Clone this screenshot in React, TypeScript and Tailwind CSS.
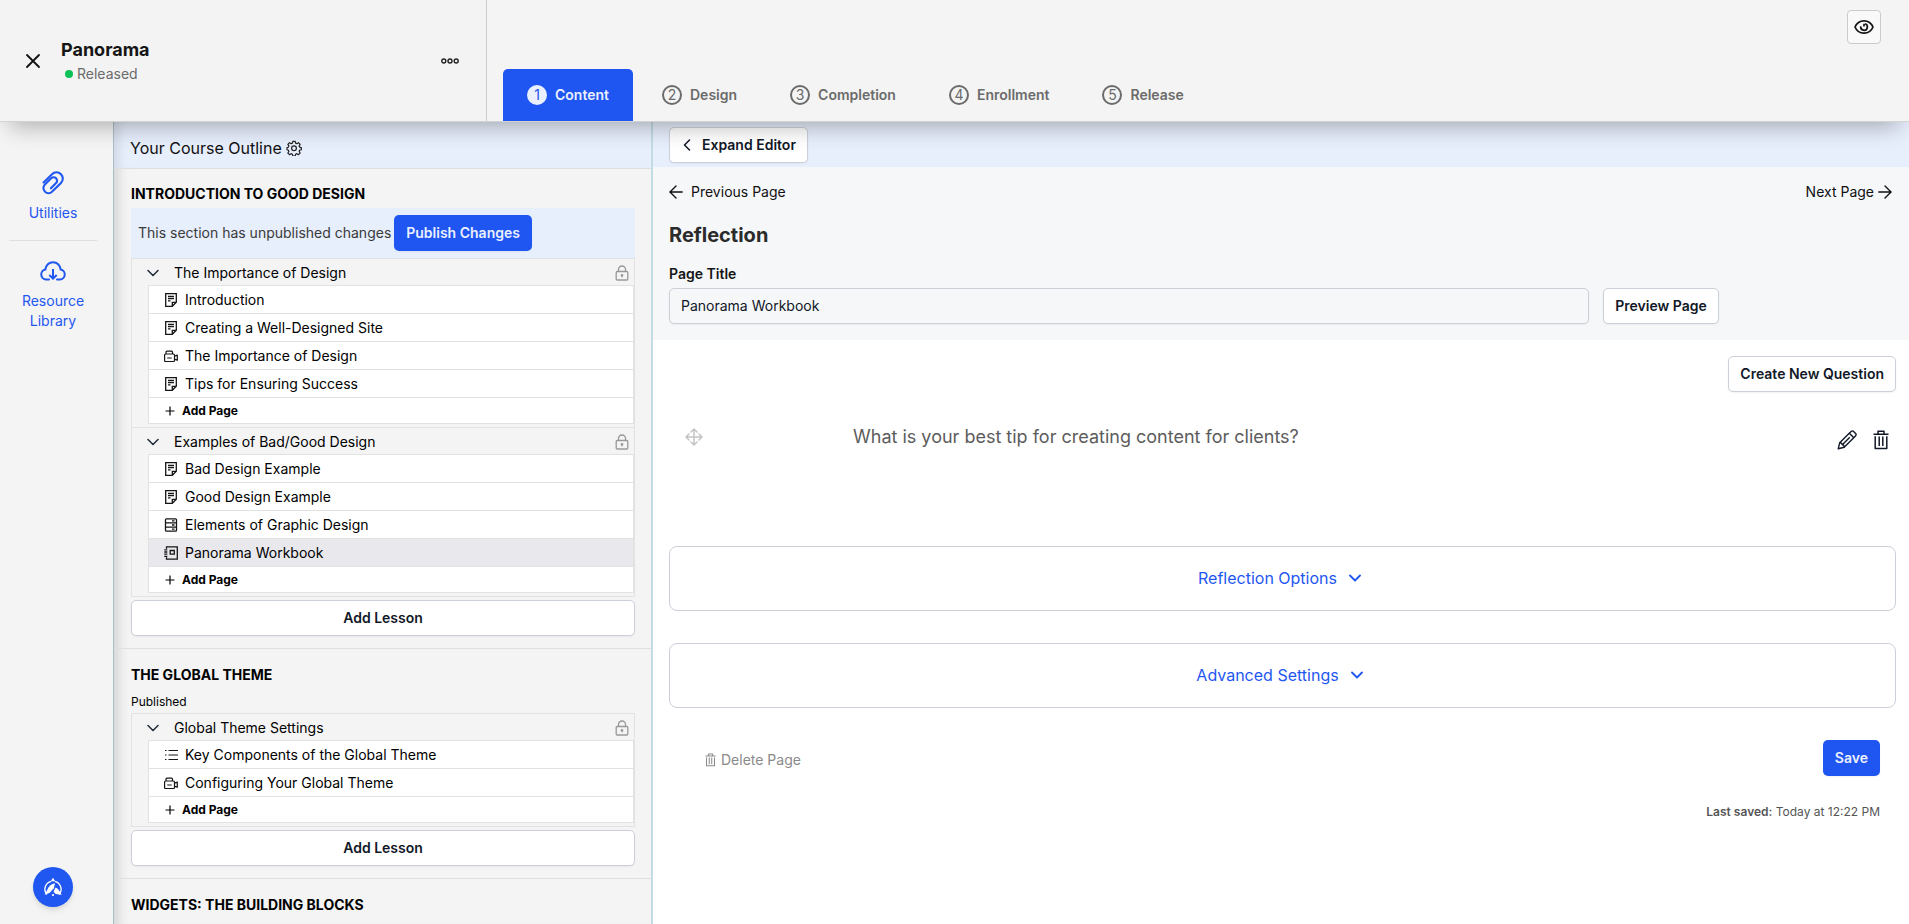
import React from "react";

type IconProps = { className?: string };

function Svg({ className, children, box = "0 0 24 24", w = 1.5 }: IconProps & { children: React.ReactNode; box?: string; w?: number }) {
  return (
    <svg className={className} viewBox={box} fill="none" stroke="currentColor" strokeWidth={w} aria-hidden="true">
      {children}
    </svg>
  );
}

const CloseIcon = ({ className }: IconProps) => (
  <Svg className={className} box="0 0 16 16" w={1.8}>
    <path d="M2 2l12 12M14 2L2 14" strokeLinecap="round" />
  </Svg>
);

const MoreIcon = ({ className }: IconProps) => (
  <Svg className={className} box="0 0 18 8" w={1.4}>
    <circle cx="2.8" cy="4" r="2" />
    <circle cx="9" cy="4" r="2" />
    <circle cx="15.2" cy="4" r="2" />
  </Svg>
);

const EyeIcon = ({ className }: IconProps) => (
  <Svg className={className} box="0 0 20 16" w={1.7}>
    <path d="M1 8c1.6-3.9 5-6.2 9-6.2S17.4 4.100 19 8c-1.6 3.9-5 6.2-9 6.2S2.600 11.900 1 8z" strokeLinejoin="round" />
    <path d="M11 4.800a3.300 3.300 0 1 1-4.200 2.600M10 4.700v2.800" />
  </Svg>
);

const ClipIcon = ({ className }: IconProps) => (
  <Svg className={className} w={2.1}>
    <path d="M2.500 11.500L11 3.200a6.200 6.200 0 0 1 9 0 6.200 6.200 0 0 1 0 8.700l-8.800 8.700a5 5 0 0 1-7.300 0 5 5 0 0 1 0-7.100l6.300-6.200a3.400 3.400 0 0 1 4.900 0 3.400 3.400 0 0 1 0 4.800l-5.200 5.200" strokeLinecap="round" strokeLinejoin="round" />
  </Svg>
);

const CloudIcon = ({ className }: IconProps) => (
  <Svg className={className} box="0 0 26 20" w={2}>
    <path d="M9 18.500H6a5 5 0 0 1-.7-9.900C5.800 4.300 9 1.200 13 1.200s7.200 3.100 7.700 7.400a5 5 0 0 1-.7 9.900h-3" strokeLinecap="round" />
    <path d="M13 8v9.500M9.300 14l3.700 3.700 3.700-3.700" />
  </Svg>
);

const GearIcon = ({ className }: IconProps) => (
  <Svg className={className} w={1.8}>
    <path d="M10.200 2h3.600l.6 2.700 1.900.8 2.400-1.500 2.500 2.500-1.500 2.400.8 1.900 2.500.6v3.200l-2.500.6-.8 1.900 1.500 2.400-2.500 2.500-2.400-1.500-1.900.8-.6 2.700h-3.600l-.6-2.700-1.900-.8-2.400 1.500-2.500-2.500 1.500-2.400-.8-1.900L1.500 14.600v-3.200l2-.6.8-1.900-1.500-2.400L5.300 4l2.400 1.500 1.900-.8z" strokeLinejoin="round" />
    <circle cx="12" cy="12.500" r="3.600" />
  </Svg>
);

const ChevronIcon = ({ className, w = 1.5 }: IconProps & { w?: number }) => (
  <Svg className={className} box="0 0 12 8" w={w}>
    <path d="M1 1.500l5 5 5-5" strokeLinecap="round" strokeLinejoin="round" />
  </Svg>
);

const LockIcon = ({ className }: IconProps) => (
  <Svg className={className} box="0 0 14 16" w={1.3}>
    <rect x="1.200" y="6.500" width="11.600" height="8.500" rx="1" />
    <path d="M3.500 6.500V4.500a3.500 3.500 0 0 1 7 0V6.500M7 10v2.200" />
    <circle cx="7" cy="10.300" r=".7" fill="currentColor" />
  </Svg>
);

const NoteIcon = ({ className }: IconProps) => (
  <Svg className={className} box="0 0 14 14" w={1.3}>
    <path d="M1.700.7h10.600v8.600l-4 4H1.700zM8.300 13.300v-4h4M4 3.500h6M4 5.700h6M4 7.900h2.500" />
  </Svg>
);

const VideoIcon = ({ className }: IconProps) => (
  <Svg className={className} box="0 0 14 14" w={1.2}>
    <path d="M1.600 5h7.900q1 0 1 1v5.500q0 1-1 1H1.600q-1 0-1-1V6q0-1 1-1zM2 5V3.200q0-1 1-1h4.500q1 0 1 1V5M3.200 9h4.500M10.500 7.300l2.800-1.200v5.200l-2.800-1.200" strokeLinejoin="round" />
  </Svg>
);

const GridIcon = ({ className }: IconProps) => (
  <Svg className={className} box="0 0 14 14" w={1.3}>
    <rect x="1.500" y=".8" width="11" height="12.400" rx="1" />
    <path d="M1.500 4.900h11M1.500 9.100h11M8 2.900h2.500M8 7h2.500M8 11.100h2.500" />
  </Svg>
);

const WorkbookIcon = ({ className }: IconProps) => (
  <Svg className={className} box="0 0 14 14" w={1.3}>
    <path d="M2.500 2.700V.9h10.800v12.200H2.500v-1.800M.3 3.800h3M.3 6h3M.3 8.200h3M.3 10.400h3M6.200 4.500h4.100v3.600H6.200z" />
  </Svg>
);

const ListIcon = ({ className }: IconProps) => (
  <Svg className={className} box="0 0 14 14" w={1.2}>
    <path d="M4.500 2.500H14M4.500 7H14M4.500 11.500H14M1 2.500h1.500M1 7h1.500M1 11.500h1.500" />
  </Svg>
);

const PlusIcon = ({ className }: IconProps) => (
  <Svg className={className} box="0 0 10 10" w={1.2}>
    <path d="M5 .5v9M.5 5h9" />
  </Svg>
);

const ArrowIcon = ({ className }: IconProps) => (
  <Svg className={className} box="0 0 14 14" w={1.4}>
    <path d="M.8 7h12.400M7 1l6 6-6 6" strokeLinejoin="round" strokeLinecap="round" />
  </Svg>
);

const MoveIcon = ({ className }: IconProps) => (
  <Svg className={className} box="0 0 18 18" w={1.5}>
    <path d="M9 1v16M1 9h16M6 4l3-3 3 3M6 14l3 3 3-3M4 6L1 9l3 3M14 6l3 3-3 3" strokeLinecap="round" strokeLinejoin="round" />
  </Svg>
);

const PencilIcon = ({ className }: IconProps) => (
  <Svg className={className} box="0 0 20 20" w={1.4}>
    <path d="M1.200 18.800l1.500-6L12.500 3l1.700-1.600q1.200-1 2.400 0l2 2q1 1.200 0 2.400L17 7.500 7.200 17.300z" strokeLinejoin="round" />
    <path d="M12.300 3.300l4.500 4.500M5.300 14.700l7.500-7.500M2.700 12.800l1.700.3.900 1.600 1.600.7.300 1.900" />
  </Svg>
);

const TrashIcon = ({ className }: IconProps) => (
  <Svg className={className} box="0 0 16 20" w={1.5}>
    <path d="M.5 4.300h15M5 4.300V1.300h6v3M2.200 6.200v12.300h11.600V6.200M6.200 6.500V16M9.800 6.500V16" strokeLinejoin="round" />
  </Svg>
);

const LogoIcon = ({ className }: IconProps) => (
  <svg className={className} viewBox="0 0 20 20" aria-hidden="true">
    <path d="M4 17.500A8 8 0 0 1 8.200 4.300M11.800 4.300A8 8 0 0 1 16 17.500" fill="none" stroke="white" strokeWidth="1.300" />
    <path d="M10 .8l2.200 3.400H7.800z" fill="white" />
    <path d="M1.500 17.800l4.200-7.600q3-3.800 6.300-3.600l-1.200 4.600-4 4.600z" fill="white" />
    <path d="M12.500 10.500q3 1 6.200 7.300l-6-.8-2.200-2.200z" fill="white" />
    <circle cx="10" cy="18" r="1.100" fill="white" />
  </svg>
);

const outlineBtn =
  "flex items-center justify-center rounded-[5px] border border-[#cbd0d8] bg-white px-[11px] py-2 text-sm leading-[18px] font-semibold text-[#111827] shadow-xs";
const solidBtn = "rounded-[5px] bg-[#1f55f0] px-3 py-2 text-sm leading-5 font-semibold text-[#eaf0fe] shadow-xs";

const steps = ["Content", "Design", "Completion", "Enrollment", "Release"];

function Header() {
  return (
    <header className="relative z-10 flex shrink-0 border-b border-[#d3d3d3] bg-[#f4f4f4] shadow-[0_14px_22px_-10px_rgba(0,0,0,0.3)]">
      <div className="flex w-[487px] items-center border-r border-[#cbcbcb] bg-[#f3f3f3] pr-[27px] pl-[25px]">
        <button type="button" aria-label="Close">
          <CloseIcon className="size-4 text-[#111]" />
        </button>
        <div className="ml-5 flex-1 pt-[2px]">
          <h1 className="text-lg leading-6 font-bold text-[#151515]">Panorama</h1>
          <p className="flex items-center gap-1 pl-1 text-sm leading-6 text-[#6b6b6b]">
            <span className="size-2 rounded-full bg-[#0cc258]" />
            Released
          </p>
        </div>
        <button type="button" aria-label="More options">
          <MoreIcon className="h-2 w-[18px] text-[#222]" />
        </button>
      </div>
      <nav className="flex items-end gap-[5px] pt-[69px] pl-4">
        {steps.map((s, i) => (
          <a
            key={s}
            href="#"
            className={
              "flex items-center gap-2 rounded-t-[5px] px-6 py-4 text-sm leading-5 font-semibold " +
              (i === 0 ? "bg-[#1f55f0] text-[#eaf0fe]" : "text-[#6b6b6b]")
            }
          >
            <span
              className={
                "flex size-5 items-center justify-center rounded-full text-sm leading-none font-normal " +
                (i === 0 ? "bg-[#eaf0fe] text-[#1f55f0]" : "border-2 border-[#6b6b6b]")
              }
            >
              {i + 1}
            </span>
            {s}
          </a>
        ))}
      </nav>
      <button
        type="button"
        aria-label="Preview course"
        className="mt-[10px] mr-7 ml-auto flex size-[34px] items-center justify-center self-start rounded-[4px] border border-[#cbcbcb] bg-[#f9f9f9]"
      >
        <EyeIcon className="h-4 w-5 text-[#151515]" />
      </button>
    </header>
  );
}

function Rail() {
  return (
    <aside className="flex w-[114px] shrink-0 flex-col items-center border-r border-[#a9bfc8] bg-[#f4f4f4] pt-[49px] pr-4 pb-[17px] pl-[9px] text-center text-sm leading-5 text-[#1f57f0]">
      <a href="#" className="flex w-full flex-col items-center gap-2 border-b border-[#dfdfdf] pb-[17px]">
        <ClipIcon className="size-6" />
        Utilities
      </a>
      <a href="#" className="flex w-full flex-col items-center gap-[10px] px-2 pt-5">
        <CloudIcon className="h-5 w-[26px]" />
        Resource Library
      </a>
      <button type="button" aria-label="Help" className="mt-auto flex size-10 items-center justify-center rounded-full bg-[#1f57f0] shadow-md">
        <LogoIcon className="size-5" />
      </button>
    </aside>
  );
}

type Page = { icon: (p: IconProps) => React.JSX.Element; title: string; active?: boolean };

function Lesson({ title, pages, last }: { title: string; pages: Page[]; last?: boolean }) {
  return (
    <section className={"border-x border-t border-[#e2e2e2] pb-[3px] " + (last ? "border-b" : "")}>
      <div className="flex items-center pt-[2px] pr-[5px] pl-[15px] text-sm leading-6">
        <button type="button" aria-label="Toggle lesson">
          <ChevronIcon className="h-2 w-3 text-[#222b3a]" />
        </button>
        <h3 className="ml-[15px] flex-1">{title}</h3>
        <LockIcon className="h-4 w-[14px] text-[#999]" />
      </div>
      <ul className="ml-4 border border-[#e2e2e2] bg-white text-sm leading-[27px]">
        {pages.map((p) => (
          <li key={p.title} className={"border-b border-[#e2e2e2] " + (p.active ? "bg-[#e8e8ed]" : "")}>
            <a href="#" className="flex items-center gap-[7px] pl-[15px]">
              <p.icon className="size-[14px] text-[#151515]" />
              {p.title}
            </a>
          </li>
        ))}
        <li>
          <button type="button" className="flex items-center gap-[7px] pl-4 text-xs leading-[25px] font-bold">
            <PlusIcon className="size-[10px]" />
            Add Page
          </button>
        </li>
      </ul>
    </section>
  );
}

function Outline() {
  return (
    <div className="w-[539px] shrink-0 overflow-hidden border-r-2 border-[#c3dbe3] bg-[#f4f4f4] shadow-[inset_12px_0_12px_-8px_rgba(0,0,0,0.14)]">
      <div className="flex items-center gap-1 border-b border-[#dedfe3] bg-[#e7eefc] pt-[13px] pb-[7px] pl-4 shadow-[inset_12px_0_12px_-8px_rgba(0,0,0,0.1)]">
        <h2 className="text-base leading-[26px] text-[#111]">Your Course Outline</h2>
        <button type="button" aria-label="Outline settings">
          <GearIcon className="size-4 text-[#222]" />
        </button>
      </div>

      <div className="border-b border-[#e0e0e0] pt-[13px] pr-4 pb-3 pl-[17px]">
        <h2 className="mb-[2px] text-sm leading-6 font-bold">INTRODUCTION TO GOOD DESIGN</h2>
        <div className="flex items-center gap-[3px] bg-[#e7eefc] px-[7px] py-[7px]">
          <p className="text-sm text-[#3a3a3a]">This section has unpublished changes</p>
          <button type="button" className={solidBtn}>Publish Changes</button>
        </div>
        <Lesson
          title="The Importance of Design"
          pages={[
            { icon: NoteIcon, title: "Introduction" },
            { icon: NoteIcon, title: "Creating a Well-Designed Site" },
            { icon: VideoIcon, title: "The Importance of Design" },
            { icon: NoteIcon, title: "Tips for Ensuring Success" },
          ]}
        />
        <Lesson
          last
          title="Examples of Bad/Good Design"
          pages={[
            { icon: NoteIcon, title: "Bad Design Example" },
            { icon: NoteIcon, title: "Good Design Example" },
            { icon: GridIcon, title: "Elements of Graphic Design" },
            { icon: WorkbookIcon, title: "Panorama Workbook", active: true },
          ]}
        />
        <button type="button" className={outlineBtn + " mt-[3px] w-full"}>Add Lesson</button>
      </div>

      <div className="border-b border-[#e0e0e0] pt-[14px] pr-4 pb-3 pl-[17px]">
        <h2 className="text-sm leading-6 font-bold">THE GLOBAL THEME</h2>
        <p className="pt-1 text-xs leading-[22px]">Published</p>
        <Lesson
          last
          title="Global Theme Settings"
          pages={[
            { icon: ListIcon, title: "Key Components of the Global Theme" },
            { icon: VideoIcon, title: "Configuring Your Global Theme" },
          ]}
        />
        <button type="button" className={outlineBtn + " mt-[3px] w-full"}>Add Lesson</button>
      </div>

      <div className="pt-[14px] pl-[17px]">
        <h2 className="text-sm leading-6 font-bold">WIDGETS: THE BUILDING BLOCKS</h2>
      </div>
    </div>
  );
}

function Panel({ label }: { label: string }) {
  return (
    <button
      type="button"
      className="flex w-full items-center justify-center gap-3 rounded-lg border border-[#cbd0d8] pt-[19px] pr-[6px] pb-5 text-base text-[#1f57f0]"
    >
      {label}
      <ChevronIcon className="h-2 w-3" w={1.8} />
    </button>
  );
}

function Editor() {
  return (
    <main className="min-w-0 flex-1 overflow-hidden bg-white">
      <div className="bg-[#e7eefc] px-4 pt-[5px] pb-1">
        <button type="button" className={outlineBtn + " gap-[9px]"}>
          <ChevronIcon className="h-2 w-3 rotate-90" />
          Expand Editor
        </button>
      </div>

      <div className="bg-[#f5f7f9] pt-[15px] pr-[13px] pb-4 pl-4">
        <nav className="flex items-center justify-between pr-1 text-sm text-[#111]">
          <a href="#" className="flex items-center gap-2">
            <ArrowIcon className="size-[14px] rotate-180" />
            Previous Page
          </a>
          <a href="#" className="flex items-center gap-1">
            Next Page
            <ArrowIcon className="size-[14px]" />
          </a>
        </nav>
        <h2 className="mt-[18px] text-xl leading-[30px] font-bold text-[#2b2b2b]">Reflection</h2>
        <label htmlFor="page-title" className="mt-[14px] block text-sm leading-5 font-semibold text-[#151515]">
          Page Title
        </label>
        <div className="mt-1 flex items-center gap-[14px]">
          <input
            id="page-title"
            defaultValue="Panorama Workbook"
            className="w-3/4 rounded-[5px] border border-[#cbd0d8] bg-[#f5f7f9] px-[11px] py-2 text-sm leading-[18px] text-[#111827] shadow-xs"
          />
          <button type="button" className={outlineBtn}>Preview Page</button>
        </div>
      </div>

      <div className="pt-4 pr-[13px] pl-4">
        <div className="flex justify-end">
          <button type="button" className={outlineBtn}>Create New Question</button>
        </div>

        <div className="mt-[31px] flex items-center pr-[7px] pl-4 text-[#111827]">
          <button type="button" aria-label="Reorder question" className="mr-[150px]">
            <MoveIcon className="size-[18px] text-[#c4c4c4]" />
          </button>
          <p className="flex-1 text-lg text-[#5c5c5c]">What is your best tip for creating content for clients?</p>
          <div className="flex gap-4 pt-[6px]">
            <button type="button" aria-label="Edit question">
              <PencilIcon className="size-5" />
            </button>
            <button type="button" aria-label="Delete question">
              <TrashIcon className="h-5 w-4" />
            </button>
          </div>
        </div>

        <div className="mt-[95px] flex flex-col gap-8">
          <Panel label="Reflection Options" />
          <Panel label="Advanced Settings" />
        </div>

        <div className="mt-8 flex items-center justify-between pr-4 pl-9">
          <button type="button" className="flex items-center gap-[5px] pt-1 text-sm text-[#8a8a8a]">
            <TrashIcon className="h-[14px] w-[11px]" />
            Delete Page
          </button>
          <button type="button" className={solidBtn}>Save</button>
        </div>
        <p className="mt-7 pr-4 text-right text-xs text-[#555]">
          <strong className="font-semibold">Last saved:</strong> Today at 12:22 PM
        </p>
      </div>
    </main>
  );
}

export default function App() {
  return (
    <div className="flex h-screen flex-col overflow-hidden bg-white font-['Inter',sans-serif] text-black">
      <Header />
      <div className="flex min-h-0 flex-1">
        <Rail />
        <Outline />
        <Editor />
      </div>
    </div>
  );
}
